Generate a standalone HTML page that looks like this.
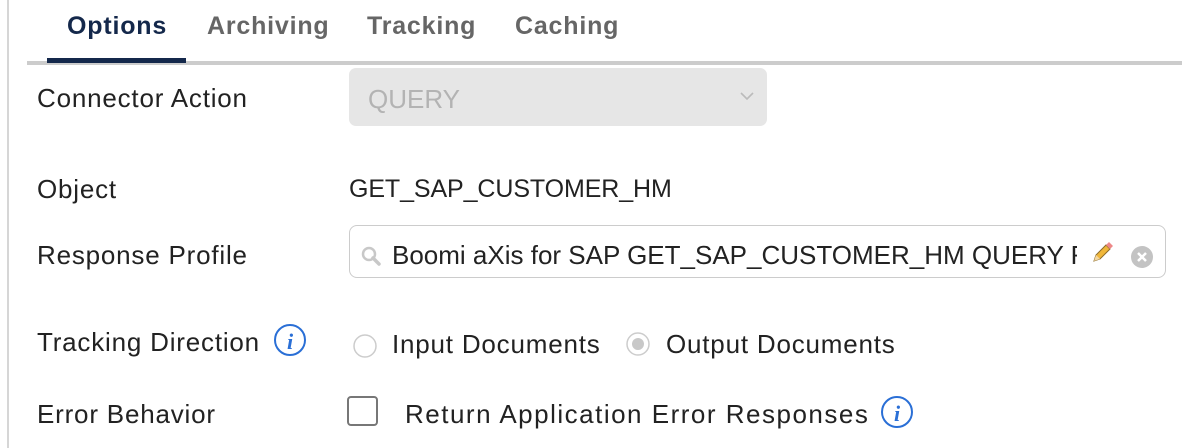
<!DOCTYPE html>
<html><head><style>
body{margin:0;width:1182px;height:448px;background:#fff;position:relative;overflow:hidden;font-family:"Liberation Sans",sans-serif;color:#222;}
.a{position:absolute;white-space:nowrap;}
.lbl{font-size:26px;letter-spacing:0.8px;}
.tab{font-size:25px;font-weight:bold;color:#666;top:12px;letter-spacing:0.8px;}
</style></head><body>
<div class="a" style="left:7px;top:0;width:2px;height:448px;background:#d6d6d6"></div>
<div class="a tab" style="left:67px;color:#14284b">Options</div>
<div class="a tab" style="left:207px">Archiving</div>
<div class="a tab" style="left:367px">Tracking</div>
<div class="a tab" style="left:515px">Caching</div>
<div class="a" style="left:27px;top:61px;width:1155px;height:4px;background:#ccc"></div>
<div class="a" style="left:47px;top:58px;width:139px;height:5px;background:#14284b"></div>

<div class="a lbl" style="left:37px;top:83px">Connector Action</div>
<div class="a" style="left:349px;top:68px;width:418px;height:58px;background:#e6e6e6;border-radius:7px"></div>
<div class="a lbl" style="left:368px;top:84px;color:#b3b3b3;letter-spacing:0">QUERY</div>
<svg class="a" style="left:739px;top:90px" width="16" height="12"><path d="M2 3l6 6 6-6" fill="none" stroke="#bbb" stroke-width="1.6"/></svg>

<div class="a lbl" style="left:37px;top:174px">Object</div>
<div class="a lbl" style="left:349px;top:175px;font-size:25px;letter-spacing:-0.1px">GET_SAP_CUSTOMER_HM</div>

<div class="a lbl" style="left:37px;top:240px">Response Profile</div>
<div class="a" style="left:349px;top:225px;width:815px;height:51px;border:1.5px solid #ccc;border-radius:8px"></div>
<svg class="a" style="left:360px;top:245px" width="24" height="24"><circle cx="9" cy="9" r="6" fill="none" stroke="#c8c8c8" stroke-width="2.5"/><path d="M13 13l6 6" stroke="#c8c8c8" stroke-width="3.5" stroke-linecap="round"/></svg>
<div class="a lbl" style="left:392px;top:240px;width:685px;overflow:hidden;letter-spacing:0">Boomi aXis for SAP GET_SAP_CUSTOMER_HM QUERY Response</div>
<svg class="a" style="left:1089px;top:240px" width="26" height="26"><path d="M5 21l2-6 10-10 4 4-10 10z" fill="#f0b73a" stroke="#8a6a2a" stroke-width="1"/><path d="M17 5l3-3 4 4-3 3z" fill="#e88"/><path d="M5 21l2-6 4 4z" fill="#f3d7a0"/></svg>
<svg class="a" style="left:1129px;top:244px" width="26" height="26"><circle cx="13" cy="13" r="11" fill="#c3c3c3"/><path d="M9 9l8 8M17 9l-8 8" stroke="#fff" stroke-width="2.5"/></svg>

<div class="a lbl" style="left:37px;top:327px">Tracking Direction</div>
<svg class="a" style="left:273px;top:323px" width="34" height="34"><circle cx="17" cy="17" r="15" fill="#fff" stroke="#2a6fd6" stroke-width="2"/><text x="17" y="26" text-anchor="middle" font-family="Liberation Serif" font-style="italic" font-weight="bold" font-size="22" fill="#2a6fd6">i</text></svg>
<svg class="a" style="left:352px;top:333px" width="26" height="26"><circle cx="13" cy="13" r="11" fill="#fff" stroke="#ccc" stroke-width="1.5"/></svg>
<div class="a lbl" style="left:392px;top:329px">Input Documents</div>
<svg class="a" style="left:625px;top:331px" width="26" height="26"><circle cx="13" cy="13" r="11" fill="#fff" stroke="#ccc" stroke-width="1.5"/><circle cx="13" cy="13" r="6" fill="#c8c8c8"/></svg>
<div class="a lbl" style="left:666px;top:329px">Output Documents</div>

<div class="a lbl" style="left:37px;top:399px">Error Behavior</div>
<div class="a" style="left:347px;top:396px;width:31px;height:30px;border:2px solid #777;border-radius:4px;box-sizing:border-box"></div>
<div class="a lbl" style="left:405px;top:399px;letter-spacing:1.5px">Return Application Error Responses</div>
<svg class="a" style="left:880px;top:395px" width="34" height="34"><circle cx="17" cy="17" r="15" fill="#fff" stroke="#2a6fd6" stroke-width="2"/><text x="17" y="26" text-anchor="middle" font-family="Liberation Serif" font-style="italic" font-weight="bold" font-size="22" fill="#2a6fd6">i</text></svg>
</body></html>
